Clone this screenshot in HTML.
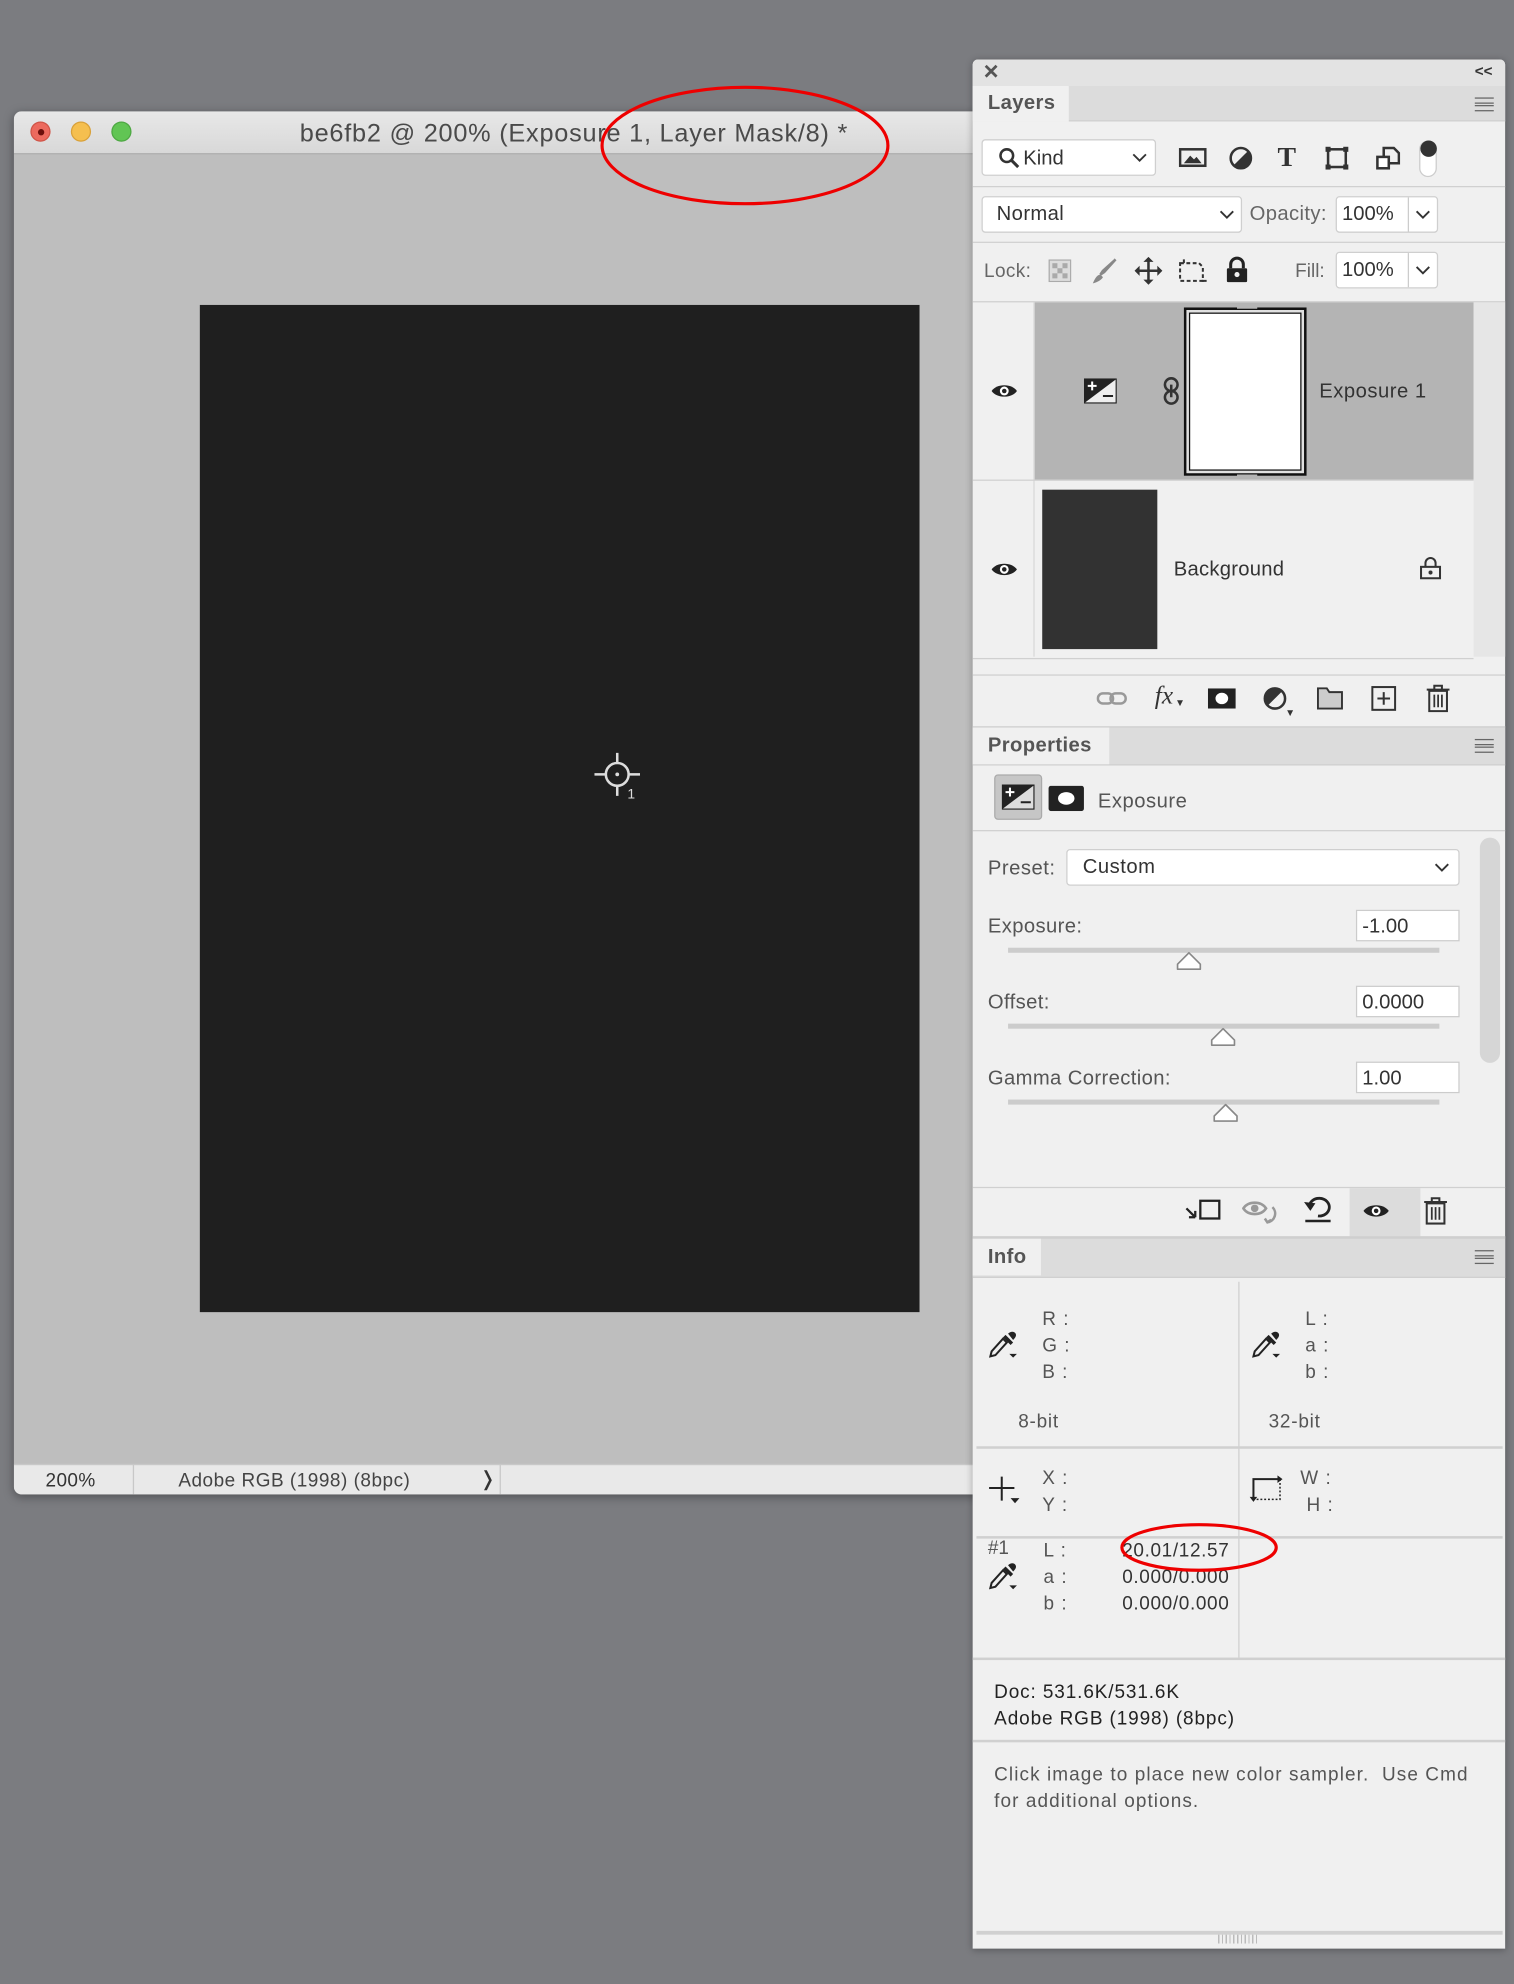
<!DOCTYPE html>
<html><head><meta charset="utf-8"><style>
html,body{margin:0;padding:0;background:#7b7c80;overflow:hidden}
#root{position:absolute;left:0;top:0;width:1197px;height:1568px;transform:scale(1.26483,1.26531);transform-origin:0 0;font-family:"Liberation Sans",sans-serif;color:#333}
.a{position:absolute}
.t{position:absolute;white-space:nowrap;font-size:15px;color:#444;line-height:1}
.box{position:absolute;background:#fff;border:1px solid #cfcfcf;border-radius:3px;box-sizing:border-box}
.hl{position:absolute;height:1px;background:#d0d0d0}
.menu{position:absolute;width:15px;height:9px;border-top:1px solid #666;border-bottom:1px solid #666}
.menu:after{content:"";position:absolute;left:0;right:0;top:3px;height:3px;border-top:1px solid #666;border-bottom:1px solid #666;box-sizing:border-box}
</style></head><body><div id="root">

<div class="a" style="left:11px;top:88px;width:780px;height:1093px;background:#bebebe;border-radius:6px 0 0 6px;overflow:hidden;box-shadow:0 2px 8px rgba(0,0,0,.35)">
  <div class="a" style="left:0;top:0;width:780px;height:33px;background:linear-gradient(#e8e8e8,#d8d8d8);border-bottom:1px solid #b0b0b0"></div>
  <div class="a" style="left:13px;top:8px;width:16px;height:16px;border-radius:50%;background:#ec6a5e;border:1px solid #d05548;box-sizing:border-box"><div class="a" style="left:5px;top:5px;width:5px;height:5px;border-radius:50%;background:#6b0f0b"></div></div>
  <div class="a" style="left:45px;top:8px;width:16px;height:16px;border-radius:50%;background:#f5bf4f;border:1px solid #d9a13a;box-sizing:border-box"></div>
  <div class="a" style="left:77px;top:8px;width:16px;height:16px;border-radius:50%;background:#61c554;border:1px solid #4ea843;box-sizing:border-box"></div>
  <div class="t" style="left:226px;top:8px;font-size:20px;color:#4a4a4a;letter-spacing:0.6px">be6fb2 @ 200% (Exposure 1, Layer Mask/8) *</div>
  <div class="a" style="left:147px;top:153px;width:569px;height:796px;background:#1f1f1f"></div>
  <div class="a" style="left:0;top:1069px;width:780px;height:24px;background:#e9e9e9;border-top:1px solid #c8c8c8"></div>
  <div class="t" style="left:25px;top:1075px;font-size:15px;color:#333;letter-spacing:.3px">200%</div>
  <div class="a" style="left:94px;top:1069px;width:1px;height:24px;background:#c8c8c8"></div>
  <div class="a" style="left:384px;top:1069px;width:1px;height:24px;background:#c8c8c8"></div>
  <div class="t" style="left:130px;top:1075px;font-size:15px;color:#444;letter-spacing:.4px">Adobe RGB (1998) (8bpc)</div>
  <div class="t" style="left:368px;top:1074px;font-size:16px;color:#333">&#x276D;</div>
</div>
<svg class="a" style="left:466px;top:592px" width="44" height="44" viewBox="0 0 44 44"><circle cx="22" cy="20" r="9" fill="none" stroke="#ddd" stroke-width="2"/><circle cx="22" cy="20" r="1.5" fill="#ddd"/><path d="M22 3V11M22 29V37M4 20H13M31 20H40" stroke="#ddd" stroke-width="2"/><text x="30" y="39" font-size="11" fill="#ddd" font-family="Liberation Sans">1</text></svg>
<svg class="a" style="left:470px;top:64px" width="240" height="104"><ellipse cx="119" cy="51" rx="113" ry="46" fill="none" stroke="#e00" stroke-width="2.5"/></svg>

<div class="a" style="left:769px;top:47px;width:421px;height:1493px;background:#f0f0f0;border-radius:4px 4px 0 0;box-shadow:0 1px 6px rgba(0,0,0,.3)">
  <div class="a" style="left:0;top:0;width:421px;height:21px;background:#e3e3e3;border-radius:4px 4px 0 0"></div>
  <div class="t" style="left:8px;top:3px;font-size:16px;color:#555;font-weight:bold">&#x2715;</div>
  <div class="t" style="left:397px;top:3px;font-size:12px;color:#333;font-weight:bold">&lt;&lt;</div>
  <div class="a" style="left:0;top:21px;width:421px;height:27px;background:#dcdcdc;border-bottom:1px solid #cfcfcf"></div>
  <div class="a" style="left:0;top:21px;width:76px;height:28px;background:#f0f0f0"></div>
  <div class="t" style="left:12px;top:27px;font-weight:bold;font-size:16px;color:#555;letter-spacing:.3px">Layers</div>
  <div class="menu" style="left:397px;top:30px"></div>
  <div class="box" style="left:7px;top:63px;width:138px;height:29px"></div>
  <svg class="a" style="left:20px;top:69px" width="18" height="18"><circle cx="7" cy="7" r="5" fill="none" stroke="#333" stroke-width="2"/><path d="M11 11L16 16" stroke="#333" stroke-width="2.4"/></svg>
  <div class="t" style="left:40px;top:71px;font-size:16px;color:#333">Kind</div>
  <svg class="a" style="left:126px;top:74px" width="12" height="8"><path d="M1 1L6 6L11 1" fill="none" stroke="#333" stroke-width="1.5"/></svg>
  <svg class="a" style="left:163px;top:68px" width="22" height="18"><rect x="1" y="3" width="20" height="13" fill="none" stroke="#333" stroke-width="2"/><path d="M4 14L9 8L12 11L14 9L18 14Z" fill="#333"/></svg>
  <svg class="a" style="left:202px;top:68px" width="20" height="20"><circle cx="10" cy="10" r="8" fill="none" stroke="#333" stroke-width="2"/><path d="M4 16L16 4A8 8 0 0 1 4 16Z" fill="#333"/></svg>
  <div class="t" style="left:241px;top:66px;font-size:22px;font-family:'Liberation Serif',serif;font-weight:bold;color:#333">T</div>
  <svg class="a" style="left:278px;top:68px" width="20" height="20"><rect x="3" y="3" width="14" height="14" fill="none" stroke="#333" stroke-width="2"/><rect x="1" y="1" width="4" height="4" fill="#333"/><rect x="15" y="1" width="4" height="4" fill="#333"/><rect x="1" y="15" width="4" height="4" fill="#333"/><rect x="15" y="15" width="4" height="4" fill="#333"/></svg>
  <svg class="a" style="left:318px;top:68px" width="20" height="20"><path d="M7 2H15L19 6V14H7Z" fill="none" stroke="#333" stroke-width="2"/><rect x="2" y="9" width="9" height="9" fill="#fff" stroke="#333" stroke-width="2"/></svg>
  <div class="a" style="left:353px;top:64px;width:14px;height:29px;border-radius:7px;background:#fff;border:1px solid #ccc;box-sizing:border-box"></div>
  <div class="a" style="left:354px;top:64px;width:13px;height:13px;border-radius:50%;background:#333"></div>
  <div class="hl" style="left:0;top:100px;width:421px"></div>
  <div class="box" style="left:7px;top:108px;width:206px;height:29px"></div>
  <div class="t" style="left:19px;top:115px;font-size:16px;color:#333;letter-spacing:.3px">Normal</div>
  <svg class="a" style="left:195px;top:119px" width="12" height="8"><path d="M1 1L6 6L11 1" fill="none" stroke="#333" stroke-width="1.5"/></svg>
  <div class="t" style="left:219px;top:115px;font-size:16px;color:#666;letter-spacing:.3px">Opacity:</div>
  <div class="box" style="left:287px;top:108px;width:81px;height:29px"></div>
  <div class="a" style="left:344px;top:109px;width:1px;height:27px;background:#ccc"></div>
  <div class="t" style="left:292px;top:115px;font-size:16px;color:#333">100%</div>
  <svg class="a" style="left:350px;top:119px" width="12" height="8"><path d="M1 1L6 6L11 1" fill="none" stroke="#333" stroke-width="1.5"/></svg>
  <div class="hl" style="left:0;top:144px;width:421px"></div>
  <div class="t" style="left:9px;top:160px;font-size:15px;color:#666;letter-spacing:.3px">Lock:</div>
  <svg class="a" style="left:60px;top:158px" width="18" height="18"><rect x="0.5" y="0.5" width="17" height="17" fill="#ddd" stroke="#aaa"/><rect x="3" y="3" width="4" height="4" fill="#aaa"/><rect x="11" y="3" width="4" height="4" fill="#aaa"/><rect x="7" y="7" width="4" height="4" fill="#aaa"/><rect x="3" y="11" width="4" height="4" fill="#aaa"/><rect x="11" y="11" width="4" height="4" fill="#aaa"/></svg>
  <svg class="a" style="left:93px;top:156px" width="22" height="22"><path d="M20 2L11 12L8 14L10 11Z" fill="#888" stroke="#888" stroke-width="2"/><path d="M8 14C6 14 4 16 2 21C6 20 9 18 10 16Z" fill="#888"/></svg>
  <svg class="a" style="left:127px;top:155px" width="24" height="24"><path d="M12 2V22M2 12H22" stroke="#333" stroke-width="2"/><path d="M12 1L8 5H16ZM12 23L8 19H16ZM1 12L5 8V16ZM23 12L19 8V16Z" fill="#333"/></svg>
  <svg class="a" style="left:162px;top:156px" width="24" height="22"><path d="M2 5H17L20 8V19H2Z" fill="none" stroke="#333" stroke-width="1.6" stroke-dasharray="3 2"/><path d="M5 5V2M19 19H23" stroke="#333" stroke-width="1.6"/></svg>
  <svg class="a" style="left:199px;top:155px" width="20" height="22"><path d="M5 10V7A5 5 0 0 1 15 7V10" fill="none" stroke="#222" stroke-width="2.4"/><rect x="2" y="10" width="16" height="11" rx="1" fill="#222"/><circle cx="10" cy="15" r="2" fill="#f0f0f0"/></svg>
  <div class="t" style="left:255px;top:160px;font-size:15px;color:#666">Fill:</div>
  <div class="box" style="left:287px;top:152px;width:81px;height:29px"></div>
  <div class="a" style="left:344px;top:153px;width:1px;height:27px;background:#ccc"></div>
  <div class="t" style="left:292px;top:159px;font-size:16px;color:#333">100%</div>
  <svg class="a" style="left:350px;top:163px" width="12" height="8"><path d="M1 1L6 6L11 1" fill="none" stroke="#333" stroke-width="1.5"/></svg>
  <div class="hl" style="left:0;top:191px;width:421px"></div>
  <div class="a" style="left:396px;top:192px;width:25px;height:280px;background:#e6e6e6"></div>
  <div class="a" style="left:49px;top:192px;width:347px;height:140px;background:#b4b4b4"></div>
  <div class="a" style="left:48px;top:192px;width:1px;height:280px;background:#d8d8d8"></div>
  <div class="hl" style="left:0;top:332px;width:396px"></div>
  <div class="hl" style="left:0;top:473px;width:396px"></div>
  <svg class="a" style="left:14px;top:255px" width="22" height="14"><path d="M1 7C5 1 17 1 21 7C17 13 5 13 1 7Z" fill="#222"/><circle cx="11" cy="7" r="3.5" fill="#fff"/><circle cx="11" cy="7" r="1.8" fill="#222"/></svg>
  <svg class="a" style="left:14px;top:396px" width="22" height="14"><path d="M1 7C5 1 17 1 21 7C17 13 5 13 1 7Z" fill="#222"/><circle cx="11" cy="7" r="3.5" fill="#fff"/><circle cx="11" cy="7" r="1.8" fill="#222"/></svg>
  <svg class="a" style="left:88px;top:252px" width="26" height="20"><rect x="0" y="0" width="26" height="20" fill="#222"/><path d="M25 1V19H1Z" fill="#eee"/><path d="M3 6H10M6.5 2.5V9.5" stroke="#fff" stroke-width="1.6"/><path d="M15 14H23" stroke="#222" stroke-width="1.6"/></svg>
  <svg class="a" style="left:150px;top:250px" width="16" height="24"><rect x="2" y="2" width="10" height="10" rx="5" fill="none" stroke="#333" stroke-width="2"/><rect x="2" y="12" width="10" height="10" rx="5" fill="none" stroke="#333" stroke-width="2"/><path d="M7 7V17" stroke="#333" stroke-width="2"/></svg>
  <div class="a" style="left:167px;top:196px;width:97px;height:133px;border:2px solid #111;box-sizing:border-box;background:#e0e0e0"></div>
  <div class="a" style="left:171px;top:200px;width:89px;height:125px;border:1px solid #111;box-sizing:border-box;background:#fff"></div>
  <div class="a" style="left:209px;top:194px;width:16px;height:3px;background:#b4b4b4"></div>
  <div class="a" style="left:209px;top:328px;width:16px;height:3px;background:#b4b4b4"></div>
  <div class="t" style="left:274px;top:255px;font-size:16px;color:#333;letter-spacing:.4px">Exposure 1</div>
  <div class="a" style="left:55px;top:340px;width:91px;height:126px;background:#323232"></div>
  <div class="t" style="left:159px;top:396px;font-size:16px;color:#333;letter-spacing:.2px">Background</div>
  <svg class="a" style="left:353px;top:393px" width="18" height="18"><path d="M5 8V5A4 4 0 0 1 13 5V8" fill="none" stroke="#333" stroke-width="1.6"/><rect x="1.5" y="8" width="15" height="9" fill="none" stroke="#333" stroke-width="1.6"/><circle cx="9" cy="12.5" r="1.6" fill="#333"/></svg>
  <div class="hl" style="left:0;top:486px;width:421px"></div>
  <svg class="a" style="left:98px;top:498px" width="24" height="14"><rect x="1" y="3" width="12" height="8" rx="4" fill="none" stroke="#999" stroke-width="2"/><rect x="11" y="3" width="12" height="8" rx="4" fill="none" stroke="#999" stroke-width="2"/></svg>
  <div class="t" style="left:144px;top:493px;font-size:20px;font-style:italic;font-family:'Liberation Serif',serif;color:#333">fx</div>
  <div class="t" style="left:160px;top:505px;font-size:8px;color:#333">&#9660;</div>
  <svg class="a" style="left:186px;top:497px" width="22" height="16"><rect width="22" height="16" fill="#222"/><ellipse cx="11" cy="8" rx="5" ry="4.5" fill="#fff"/></svg>
  <svg class="a" style="left:229px;top:495px" width="20" height="20"><circle cx="10" cy="10" r="8" fill="none" stroke="#333" stroke-width="2"/><path d="M4 16L16 4A8 8 0 0 0 4 16Z" fill="#333"/></svg>
  <div class="t" style="left:247px;top:513px;font-size:8px;color:#333">&#9660;</div>
  <svg class="a" style="left:272px;top:496px" width="21" height="18"><path d="M1 1H8L10 4H20V17H1Z" fill="#ccc" stroke="#333" stroke-width="1.5"/></svg>
  <svg class="a" style="left:315px;top:495px" width="20" height="20"><rect x="1" y="1" width="18" height="18" fill="none" stroke="#333" stroke-width="1.6"/><path d="M10 5V15M5 10H15" stroke="#333" stroke-width="1.6"/></svg>
  <svg class="a" style="left:358px;top:494px" width="20" height="22"><path d="M1 4H19M7 4V1H13V4" fill="none" stroke="#333" stroke-width="1.6"/><path d="M3 5H17V21H3Z" fill="none" stroke="#333" stroke-width="1.6"/><path d="M7 8V18M10 8V18M13 8V18" stroke="#333" stroke-width="1.4"/></svg>
  <div class="a" style="left:0;top:527px;width:421px;height:29px;background:#dcdcdc;border-bottom:1px solid #cfcfcf;border-top:1px solid #cfcfcf"></div>
  <div class="a" style="left:0;top:528px;width:108px;height:29px;background:#f0f0f0"></div>
  <div class="t" style="left:12px;top:535px;font-weight:bold;font-size:16px;color:#555;letter-spacing:.3px">Properties</div>
  <div class="menu" style="left:397px;top:537px"></div>
  <div class="a" style="left:17px;top:565px;width:38px;height:36px;background:#c6c6c6;border:1px solid #aaa;border-radius:3px;box-sizing:border-box"></div>
  <svg class="a" style="left:23px;top:573px" width="26" height="20"><rect width="26" height="20" fill="#222"/><path d="M25 1V19H1Z" fill="#ddd"/><path d="M3 6H10M6.5 2.5V9.5" stroke="#fff" stroke-width="1.6"/><path d="M15 14H23" stroke="#222" stroke-width="1.6"/></svg>
  <svg class="a" style="left:60px;top:574px" width="28" height="20"><rect width="28" height="20" rx="2" fill="#222"/><ellipse cx="14" cy="10" rx="6.5" ry="5" fill="#fff"/></svg>
  <div class="t" style="left:99px;top:579px;font-size:16px;color:#555;letter-spacing:.4px">Exposure</div>
  <div class="hl" style="left:0;top:609px;width:421px"></div>
  <div class="a" style="left:401px;top:615px;width:16px;height:178px;border-radius:8px;background:#d6d6d6"></div>
  <div class="t" style="left:12px;top:632px;font-size:16px;color:#555;letter-spacing:.4px">Preset:</div>
  <div class="box" style="left:74px;top:624px;width:311px;height:29px"></div>
  <div class="t" style="left:87px;top:631px;font-size:16px;color:#333;letter-spacing:.4px">Custom</div>
  <svg class="a" style="left:365px;top:635px" width="12" height="8"><path d="M1 1L6 6L11 1" fill="none" stroke="#333" stroke-width="1.5"/></svg>

  <div class="t" style="left:12px;top:678px;font-size:16px;color:#555;letter-spacing:.3px">Exposure:</div>
  <div class="a" style="left:303px;top:672px;width:82px;height:25px;background:#fff;border:1px solid #ccc;box-sizing:border-box"></div>
  <div class="t" style="left:308px;top:678px;font-size:16px;color:#333">-1.00</div>
  <div class="a" style="left:28px;top:702px;width:341px;height:4px;background:#ccc"></div>
  <svg class="a" style="left:161px;top:705px" width="20" height="16"><path d="M10 1L19 10V14H1V10Z" fill="#fff" stroke="#888" stroke-width="1.3" stroke-linejoin="round"/></svg>

  <div class="t" style="left:12px;top:738px;font-size:16px;color:#555;letter-spacing:.3px">Offset:</div>
  <div class="a" style="left:303px;top:732px;width:82px;height:25px;background:#fff;border:1px solid #ccc;box-sizing:border-box"></div>
  <div class="t" style="left:308px;top:738px;font-size:16px;color:#333">0.0000</div>
  <div class="a" style="left:28px;top:762px;width:341px;height:4px;background:#ccc"></div>
  <svg class="a" style="left:188px;top:765px" width="20" height="16"><path d="M10 1L19 10V14H1V10Z" fill="#fff" stroke="#888" stroke-width="1.3" stroke-linejoin="round"/></svg>

  <div class="t" style="left:12px;top:798px;font-size:16px;color:#555;letter-spacing:.3px">Gamma Correction:</div>
  <div class="a" style="left:303px;top:792px;width:82px;height:25px;background:#fff;border:1px solid #ccc;box-sizing:border-box"></div>
  <div class="t" style="left:308px;top:798px;font-size:16px;color:#333">1.00</div>
  <div class="a" style="left:28px;top:822px;width:341px;height:4px;background:#ccc"></div>
  <svg class="a" style="left:190px;top:825px" width="20" height="16"><path d="M10 1L19 10V14H1V10Z" fill="#fff" stroke="#888" stroke-width="1.3" stroke-linejoin="round"/></svg>

  <div class="hl" style="left:0;top:891px;width:421px"></div>
  <div class="a" style="left:298px;top:892px;width:56px;height:38px;background:#dcdcdc"></div>
  <svg class="a" style="left:166px;top:900px" width="32" height="20"><rect x="14" y="2" width="15" height="14" fill="none" stroke="#222" stroke-width="1.8"/><path d="M3 8L10 15M10 15V10M10 15H5" stroke="#222" stroke-width="1.8"/></svg>
  <svg class="a" style="left:213px;top:900px" width="32" height="22"><path d="M1 8C5 2 15 2 19 8C15 14 5 14 1 8Z" fill="none" stroke="#999" stroke-width="2"/><circle cx="10" cy="8" r="3" fill="#999"/><path d="M24 7A7 7 0 0 1 20 19M18 16L20 19L23 17" fill="none" stroke="#999" stroke-width="2"/></svg>
  <svg class="a" style="left:261px;top:898px" width="24" height="22"><path d="M5 9A8 7 0 1 1 12 16" fill="none" stroke="#222" stroke-width="2.2"/><path d="M1 5L6 12L10 6Z" fill="#222"/><path d="M2 20H22" stroke="#222" stroke-width="2"/></svg>
  <svg class="a" style="left:308px;top:903px" width="22" height="14"><path d="M1 7C5 1 17 1 21 7C17 13 5 13 1 7Z" fill="#222"/><circle cx="11" cy="7" r="3.5" fill="#fff"/><circle cx="11" cy="7" r="1.8" fill="#222"/></svg>
  <svg class="a" style="left:356px;top:899px" width="20" height="22"><path d="M1 4H19M7 4V1H13V4" fill="none" stroke="#333" stroke-width="1.6"/><path d="M3 5H17V21H3Z" fill="none" stroke="#333" stroke-width="1.6"/><path d="M7 8V18M10 8V18M13 8V18" stroke="#333" stroke-width="1.4"/></svg>
  <div class="a" style="left:0;top:930px;width:421px;height:30px;background:#dcdcdc;border-bottom:1px solid #cfcfcf;border-top:2px solid #cfcfcf"></div>
  <div class="a" style="left:0;top:932px;width:54px;height:29px;background:#f0f0f0"></div>
  <div class="t" style="left:12px;top:939px;font-weight:bold;font-size:16px;color:#555;letter-spacing:.3px">Info</div>
  <div class="menu" style="left:397px;top:941px"></div>
  <div class="a" style="left:210px;top:966px;width:1px;height:297px;background:#d0d0d0"></div>
  <div class="hl" style="left:3px;top:1096px;width:416px;height:2px"></div>
  <div class="hl" style="left:3px;top:1167px;width:416px;height:2px"></div>
  <div class="hl" style="left:0;top:1263px;width:421px;height:2px"></div>
  <div class="hl" style="left:0;top:1328px;width:421px;height:2px"></div>
  <svg class="a" style="left:11px;top:1003px" width="28" height="26"><path d="M17 4C19 2 22 2 23 4C24 6 22 8 21 9" fill="#222"/><path d="M15 5L21 11L19 13L13 7Z" fill="#222"/><path d="M13 8L4 18L3 22L7 21L16 11Z" fill="none" stroke="#222" stroke-width="1.6"/><path d="M18 20L21 23L24 20Z" fill="#222"/></svg>
  <svg class="a" style="left:219px;top:1003px" width="28" height="26"><path d="M17 4C19 2 22 2 23 4C24 6 22 8 21 9" fill="#222"/><path d="M15 5L21 11L19 13L13 7Z" fill="#222"/><path d="M13 8L4 18L3 22L7 21L16 11Z" fill="none" stroke="#222" stroke-width="1.6"/><path d="M18 20L21 23L24 20Z" fill="#222"/></svg>
  <div class="t" style="left:55px;top:985px;font-size:15px;color:#555;line-height:21px;letter-spacing:.8px">R :<br>G :<br>B :</div>
  <div class="t" style="left:263px;top:985px;font-size:15px;color:#555;line-height:21px;letter-spacing:.8px">L :<br>a :<br>b :</div>
  <div class="t" style="left:36px;top:1069px;font-size:15px;color:#555;letter-spacing:.6px">8-bit</div>
  <div class="t" style="left:234px;top:1069px;font-size:15px;color:#555;letter-spacing:.6px">32-bit</div>
  <svg class="a" style="left:10px;top:1117px" width="28" height="26"><path d="M13 3V22M3 12H23" stroke="#222" stroke-width="1.6"/><path d="M20 20H27L23.5 24Z" fill="#222"/></svg>
  <div class="t" style="left:55px;top:1111px;font-size:15px;color:#555;line-height:21px;letter-spacing:.8px">X :<br>Y :</div>
  <svg class="a" style="left:219px;top:1116px" width="28" height="26"><path d="M3 22V6H24" fill="none" stroke="#222" stroke-width="1.6"/><path d="M24 6V22H4" fill="none" stroke="#222" stroke-width="1.2" stroke-dasharray="1.5 1.5"/><path d="M22 3L26 6L22 9ZM0 20L3 24L6 20Z" fill="#222"/></svg>
  <div class="t" style="left:259px;top:1111px;font-size:15px;color:#555;line-height:21px;letter-spacing:.8px">W :<br>&nbsp;H :</div>
  <div class="t" style="left:12px;top:1169px;font-size:15px;color:#555">#1</div>
  <svg class="a" style="left:11px;top:1186px" width="28" height="26"><path d="M17 4C19 2 22 2 23 4C24 6 22 8 21 9" fill="#222"/><path d="M15 5L21 11L19 13L13 7Z" fill="#222"/><path d="M13 8L4 18L3 22L7 21L16 11Z" fill="none" stroke="#222" stroke-width="1.6"/><path d="M18 20L21 23L24 20Z" fill="#222"/></svg>
  <div class="t" style="left:56px;top:1168px;font-size:15px;color:#555;line-height:21px;letter-spacing:.8px">L :<br>a :<br>b :</div>
  <div class="t" style="left:100px;top:1168px;width:103px;text-align:right;font-size:15px;color:#333;line-height:21px;letter-spacing:.5px">20.01/12.57<br>0.000/0.000<br>0.000/0.000</div>
  <svg class="a" style="left:114px;top:1154px" width="130" height="44"><ellipse cx="65" cy="22" rx="61" ry="18" fill="none" stroke="#e00" stroke-width="2.5"/></svg>
  <div class="t" style="left:17px;top:1280px;font-size:15px;color:#222;line-height:21px;letter-spacing:.7px">Doc: 531.6K/531.6K<br>Adobe RGB (1998) (8bpc)</div>
  <div class="t" style="left:17px;top:1345px;font-size:15px;color:#555;line-height:21px;letter-spacing:.85px">Click image to place new color sampler.&nbsp; Use Cmd<br>for additional options.</div>
  <div class="hl" style="left:3px;top:1479px;width:416px;height:3px"></div>
  <div class="a" style="left:194px;top:1482px;width:33px;height:7px;background:repeating-linear-gradient(90deg,#bbb 0 1px,transparent 1px 3px)"></div>
</div>

</div></body></html>
